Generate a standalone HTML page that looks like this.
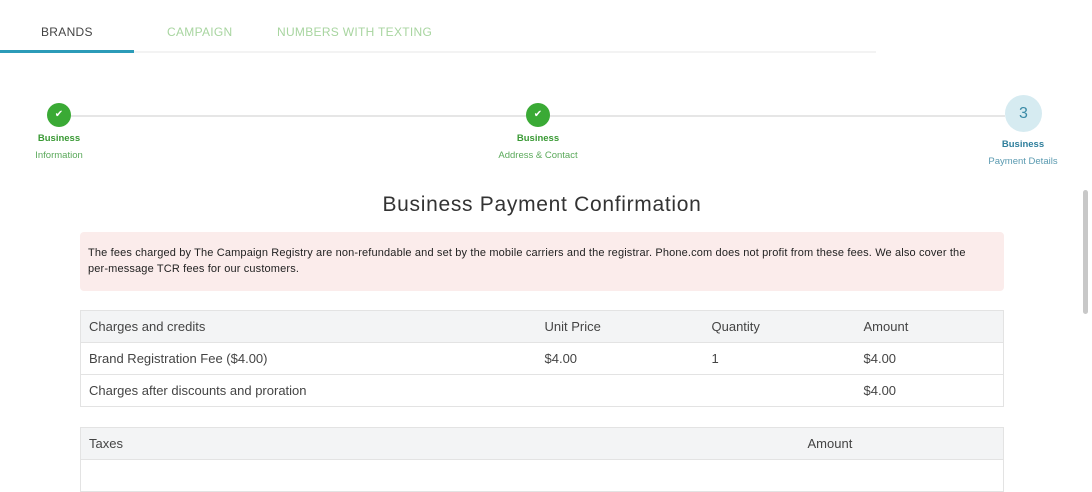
<!DOCTYPE html>
<html><head><style>
*{margin:0;padding:0;box-sizing:border-box}
body{width:1092px;height:465px;overflow:hidden;background:#fff;font-family:"Liberation Sans",sans-serif;position:relative;color:#333}
.a{position:absolute}
.tab{position:absolute;top:25px;font-size:12px;letter-spacing:.3px}
.c{position:absolute;border-radius:50%;color:#fff;text-align:center}
.lbl{position:absolute;text-align:center;width:140px;font-size:9.5px}
table{position:absolute;left:80px;width:924px;border-collapse:collapse;font-size:13px;color:#444}
td{border:1px solid #e3e3e3;height:32px;padding:0 8px;border-left:none;border-right:none}
table{border:1px solid #e3e3e3}
tr.h td{background:#f3f4f5}
</style></head><body>
<div class="tab" style="left:41px;color:#444">BRANDS</div>
<div class="tab" style="left:167px;color:#a8d5a0">CAMPAIGN</div>
<div class="tab" style="left:277px;color:#a8d5a0">NUMBERS WITH TEXTING</div>
<div class="a" style="left:0;top:51px;width:876px;height:2px;background:#f3f3f3"></div>
<div class="a" style="left:0;top:50px;width:134px;height:3px;background:#2b9bb8"></div>
<div class="a" style="left:67px;top:115px;width:938px;height:2px;background:#e6e6e6"></div>
<div class="c" style="left:47px;top:103px;width:24px;height:24px;background:#3aaa35;font-size:10px;line-height:24px">✔</div>
<div class="c" style="left:526px;top:103px;width:24px;height:24px;background:#3aaa35;font-size:10px;line-height:24px">✔</div>
<div class="c" style="left:1005px;top:95px;width:37px;height:37px;background:#d6ebf1;color:#3a8aa6;font-size:16px;line-height:37px">3</div>
<div class="lbl" style="left:-11px;top:133px;color:#3a9a35;font-weight:bold">Business</div>
<div class="lbl" style="left:-11px;top:150px;color:#5aa95a">Information</div>
<div class="lbl" style="left:468px;top:133px;color:#3a9a35;font-weight:bold">Business</div>
<div class="lbl" style="left:468px;top:150px;color:#5aa95a">Address &amp; Contact</div>
<div class="lbl" style="left:953px;top:139px;color:#2f7f9c;font-weight:bold">Business</div>
<div class="lbl" style="left:953px;top:156px;color:#5a9ab0">Payment Details</div>
<div class="a" style="left:0;width:1084px;top:193px;text-align:center;font-size:21px;color:#333;letter-spacing:.7px">Business Payment Confirmation</div>
<div class="a" style="left:80px;top:232px;width:924px;height:59px;background:#fbeceb;border-radius:4px;padding:13px 8px;font-size:11px;letter-spacing:.15px;line-height:16px;color:#222">The fees charged by The Campaign Registry are non-refundable and set by the mobile carriers and the registrar. Phone.com does not profit from these fees. We also cover the<br>per-message TCR fees for our customers.</div>
<table style="top:310px">
<tr class="h"><td style="width:456px">Charges and credits</td><td style="width:167px">Unit Price</td><td style="width:152px">Quantity</td><td>Amount</td></tr>
<tr><td>Brand Registration Fee ($4.00)</td><td>$4.00</td><td>1</td><td>$4.00</td></tr>
<tr><td>Charges after discounts and proration</td><td></td><td></td><td>$4.00</td></tr>
</table>
<table style="top:427px">
<tr class="h"><td style="width:719px">Taxes</td><td>Amount</td></tr>
<tr><td></td><td></td></tr>
</table>
<div class="a" style="left:1083px;top:190px;width:5px;height:124px;background:#c8c8c8;border-radius:3px"></div>
</body></html>
